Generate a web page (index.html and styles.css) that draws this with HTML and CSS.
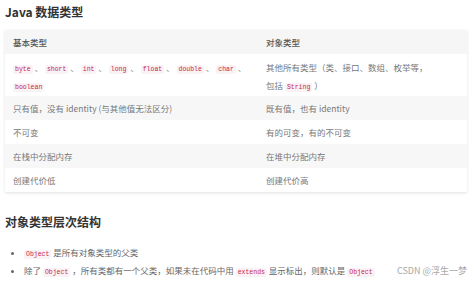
FILE: index.html
```html
<!DOCTYPE html>
<html lang="zh">
<head>
<meta charset="utf-8">
<link rel="stylesheet" href="styles.css">
</head>
<body>
<h1 class="title">Java 数据类型</h1>
<table class="types">
  <thead>
    <tr><th class="c1">基本类型</th><th>对象类型</th></tr>
  </thead>
  <tbody>
    <tr class="first">
      <td><code>byte</code> 、 <code>short</code> 、 <code>int</code> 、 <code>long</code> 、 <code>float</code> 、 <code>double</code> 、 <code>char</code> 、<br><code>boolean</code></td>
      <td>其他所有类型（类、接口、数组、枚举等，<br>包括 <code>String</code> ）</td>
    </tr>
    <tr class="alt"><td>只有值，没有 identity (与其他值无法区分)</td><td>既有值，也有 identity</td></tr>
    <tr><td>不可变</td><td>有的可变，有的不可变</td></tr>
    <tr class="alt"><td>在栈中分配内存</td><td>在堆中分配内存</td></tr>
    <tr><td>创建代价低</td><td>创建代价高</td></tr>
  </tbody>
</table>
<h2 class="subtitle">对象类型层次结构</h2>
<ul class="list">
  <li><code>Object</code> 是所有对象类型的父类</li>
  <li>除了 <code>Object</code> ，所有类都有一个父类，如果未在代码中用 <code>extends</code> 显示标出，则默认是 <code>Object</code></li>
</ul>
<div class="watermark">CSDN @浮生一梦</div>
</body>
</html>
```
FILE: styles.css
```css
html, body {
  margin: 0;
  padding: 0;
  background: #ffffff;
}
body {
  padding: 0 5px;
  font-family: "Noto Sans CJK SC", "Noto Sans", sans-serif;
  color: #666;
  position: relative;
  height: 283px;
  overflow: hidden;
}
.title {
  margin: 0;
  font-size: 12px;
  line-height: 24px;
  font-weight: 600;
  color: #333;
}
.types {
  margin-top: 6px;
  width: 462px;
  border-collapse: collapse;
  box-shadow: 0 1px 3px rgba(0, 0, 0, 0.12);
  font-size: 8.5px;
}
.types th {
  background: #f6f6f6;
  color: #555;
  font-weight: 500;
  text-align: left;
  padding: 0 8px;
  height: 24px;
  line-height: 24px;
}
.types th.c1 {
  width: 237px;
}
.types td {
  padding: 0 8px;
  height: 24px;
  line-height: 24px;
  color: #777;
  vertical-align: middle;
}
.types tr.first td {
  padding: 4px 8px 2px;
  line-height: 18px;
  height: auto;
}
.types tr.alt td {
  background: #f7f7f7;
}
code {
  font-family: "Liberation Mono", "DejaVu Sans Mono", monospace;
  font-size: 6.5px;
  line-height: 1;
  color: #c7254e;
  background: #f9f2f4;
  padding: 1px 2px;
  border-radius: 2px;
}
.subtitle {
  margin: 18px 0 0;
  font-size: 12px;
  line-height: 24px;
  font-weight: 600;
  color: #333;
}
.list {
  margin: 9px 0 0;
  padding-left: 19px;
  font-size: 8.5px;
  line-height: 18px;
  color: #666;
}
.watermark {
  position: absolute;
  left: 397px;
  top: 264px;
  font-size: 9px;
  line-height: 14px;
  color: #a8a8a8;
  background: rgba(255, 255, 255, 0.6);
}
```
